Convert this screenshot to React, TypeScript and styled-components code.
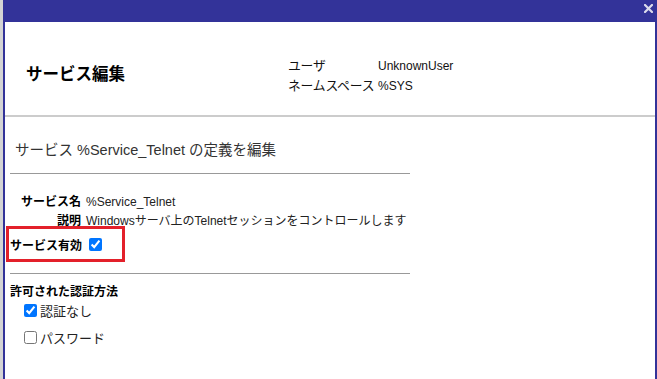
import React from 'react';
import styled, { createGlobalStyle } from 'styled-components';

const navy = '#333399';

const GlobalStyle = createGlobalStyle`
  html, body {
    margin: 0;
    padding: 0;
    background: #d4d4d4;
    font-family: 'Liberation Sans', 'Noto Sans CJK JP', sans-serif;
    color: #000;
  }
`;

const Page = styled.div`
  display: flex;
  height: 379px;
  padding-left: 3px;
  overflow: hidden;
`;

const Dialog = styled.div`
  flex: 1;
  display: flex;
  flex-direction: column;
  background: #fff;
  border-left: 2px solid ${navy};
  border-right: 2px solid ${navy};
`;

const TitleBar = styled.div`
  height: 22px;
  flex: none;
  margin: 0 -2px;
  background: ${navy};
  display: flex;
  justify-content: flex-end;
  align-items: flex-start;
  padding: 4px 4px 0 0;
  box-sizing: border-box;
`;

const Header = styled.div`
  height: 95px;
  flex: none;
  display: flex;
  align-items: center;
  padding: 9px 0 0 21px;
  box-sizing: border-box;
  border-bottom: 2px solid #cccccc;
`;

const Title = styled.h1`
  margin: 0;
  width: 262px;
  font-size: 16.5px;
  font-weight: 700;
`;

const Info = styled.div`
  display: grid;
  grid-template-columns: 90px auto;
  grid-auto-rows: 20px;
  line-height: 20px;
  margin-top: 6px;
  font-size: 12px;
  color: #111;
`;

const InfoLabel = styled.span`
  font-size: 12.8px;
  letter-spacing: -0.2px;
  white-space: nowrap;
`;

const Heading = styled.div`
  margin: 23px 0 0 10px;
  line-height: 20px;
  font-size: 14.5px;
  color: #333;
`;

const Rule = styled.hr<{ $top: number }>`
  width: 400px;
  margin: ${(p) => p.$top}px 0 0 5px;
  border: 0;
  border-top: 1px solid #999;
`;

const Fields = styled.div`
  display: grid;
  grid-template-columns: 76px auto;
  column-gap: 5px;
  grid-auto-rows: 19px;
  line-height: 19px;
  margin-top: 19px;
  font-size: 12px;
`;

const FieldLabel = styled.span`
  font-weight: 700;
  text-align: right;
`;

const FieldValue = styled.span`
  color: #222;
  white-space: nowrap;
`;

const Highlight = styled.div`
  display: flex;
  align-items: center;
  width: 112px;
  height: 30px;
  margin: -5px 0 0 1px;
  padding-left: 1px;
  border: 3px solid #e3202a;
  font-size: 12px;
  font-weight: 700;
`;

const Check = styled.input<{ $gap: number }>`
  width: 13px;
  height: 13px;
  margin: 0 0 0 ${(p) => p.$gap}px;
  flex: none;
`;

const GroupTitle = styled.div`
  margin: 9px 0 0 5px;
  line-height: 18px;
  font-size: 12px;
  font-weight: 700;
`;

const Options = styled.div`
  display: flex;
  flex-direction: column;
  gap: 9px;
  padding-left: 19px;
`;

const Option = styled.label`
  display: flex;
  align-items: center;
  gap: 3px;
  height: 18px;
  font-size: 13px;
  color: #222;
`;

const CloseIcon = () => (
  <svg width="9" height="9" viewBox="0 0 9 9">
    <path d="M1 1 L8 8 M8 1 L1 8" stroke="#dcdcec" strokeWidth="2.2" strokeLinecap="square" />
  </svg>
);

export default function App() {
  return (
    <>
      <GlobalStyle />
      <Page>
        <Dialog>
          <TitleBar>
            <CloseIcon />
          </TitleBar>
          <Header>
            <Title>サービス編集</Title>
            <Info>
              <InfoLabel>ユーザ</InfoLabel>
              <span>UnknownUser</span>
              <InfoLabel>ネームスペース</InfoLabel>
              <span>%SYS</span>
            </Info>
          </Header>
          <Heading>サービス %Service_Telnet の定義を編集</Heading>
          <Rule $top={13} />
          <Fields>
            <FieldLabel>サービス名</FieldLabel>
            <FieldValue>%Service_Telnet</FieldValue>
            <FieldLabel>説明</FieldLabel>
            <FieldValue>Windowsサーバ上のTelnetセッションをコントロールします</FieldValue>
          </Fields>
          <Highlight>
            サービス有効
            <Check type="checkbox" defaultChecked $gap={7} />
          </Highlight>
          <Rule $top={11} />
          <GroupTitle>許可された認証方法</GroupTitle>
          <Options>
            <Option>
              <Check type="checkbox" defaultChecked $gap={0} />
              認証なし
            </Option>
            <Option>
              <Check type="checkbox" $gap={0} />
              パスワード
            </Option>
          </Options>
        </Dialog>
      </Page>
    </>
  );
}
